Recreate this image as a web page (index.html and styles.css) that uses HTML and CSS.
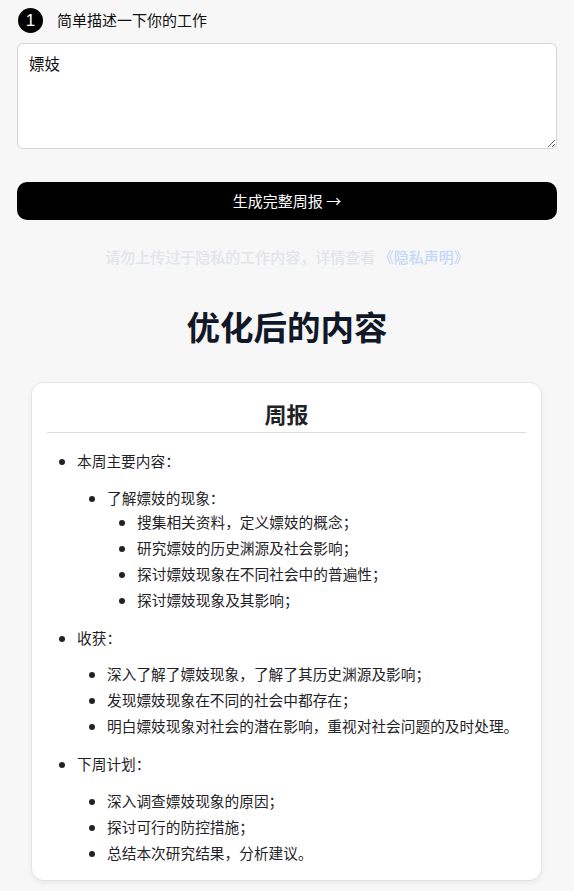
FILE: index.html
```html
<!DOCTYPE html>
<html lang="zh-CN">
<head>
<meta charset="utf-8">
<title>周报生成</title>
<link rel="stylesheet" href="styles.css">
</head>
<body>
<main class="page">
  <div class="step">
    <span class="step-num">1</span>
    <span class="step-label">简单描述一下你的工作</span>
  </div>
  <textarea class="work-input">嫖妓</textarea>
  <button class="generate-btn">生成完整周报 →</button>
  <p class="notice">请勿上传过于隐私的工作内容，详情查看 <a class="notice-link" href="#">《隐私声明》</a></p>
  <h2 class="result-title">优化后的内容</h2>
  <section class="card">
    <h3 class="card-title">周报</h3>
    <ul class="report">
      <li class="section">本周主要内容：
        <ul class="sub">
          <li>了解嫖妓的现象：
            <ul class="subsub">
              <li>搜集相关资料，定义嫖妓的概念；</li>
              <li>研究嫖妓的历史渊源及社会影响；</li>
              <li>探讨嫖妓现象在不同社会中的普遍性；</li>
              <li>探讨嫖妓现象及其影响；</li>
            </ul>
          </li>
        </ul>
      </li>
      <li class="section">收获：
        <ul class="sub">
          <li>深入了解了嫖妓现象，了解了其历史渊源及影响；</li>
          <li>发现嫖妓现象在不同的社会中都存在；</li>
          <li>明白嫖妓现象对社会的潜在影响，重视对社会问题的及时处理。</li>
        </ul>
      </li>
      <li class="section">下周计划：
        <ul class="sub">
          <li>深入调查嫖妓现象的原因；</li>
          <li>探讨可行的防控措施；</li>
          <li>总结本次研究结果，分析建议。</li>
        </ul>
      </li>
    </ul>
  </section>
</main>
</body>
</html>
```

FILE: styles.css
```css
html, body {
  margin: 0;
  padding: 0;
  background: #f7f7f7;
}

body {
  font-family: "Noto Sans CJK SC", "Noto Sans", sans-serif;
  color: #1f2937;
}

.page {
  padding: 8px 17px 6px;
}

.step {
  display: flex;
  align-items: center;
  height: 25px;
  gap: 14px;
  padding-left: 1px;
}

.step-num {
  width: 25px;
  height: 25px;
  border-radius: 50%;
  background: #000;
  color: #fff;
  font-family: "Liberation Sans", sans-serif;
  font-size: 17px;
  display: flex;
  align-items: center;
  justify-content: center;
}

.step-label {
  font-size: 15px;
  color: #111;
  line-height: 22px;
  margin-top: -2px;
}

.work-input {
  display: block;
  box-sizing: border-box;
  width: 100%;
  height: 106px;
  margin: 10px 0 0;
  padding: 7px 11px;
  border: 1px solid #d4d4d8;
  border-radius: 6px;
  background: #fff;
  font-family: "Noto Sans CJK SC", sans-serif;
  font-size: 15.5px;
  line-height: 24px;
  color: #111;
  resize: vertical;
  outline: none;
}

.generate-btn {
  display: block;
  width: 100%;
  height: 38px;
  margin-top: 33px;
  border: none;
  border-radius: 10px;
  background: #000;
  color: #fff;
  font-family: "Noto Sans CJK SC", sans-serif;
  font-size: 15px;
  line-height: 22px;
}

.notice {
  margin: 26px 0 0;
  text-align: center;
  font-size: 15px;
  line-height: 22px;
  font-weight: 500;
  color: #e2e5ea;
}

.notice-link {
  color: #c3d9fa;
  text-decoration: none;
}

.result-title {
  margin: 38px 0 0;
  text-align: center;
  font-size: 33.5px;
  line-height: 40px;
  font-weight: 700;
  color: #111827;
}

.card {
  margin: 37px 16px 0 15px;
  padding: 15px 15px 15px;
  background: #fff;
  border-radius: 12px;
  box-shadow: 0 0 0 1px rgba(0, 0, 0, 0.04), 0 2px 6px rgba(0, 0, 0, 0.08);
}

.card-title {
  margin: 0;
  padding-bottom: 4px;
  border-bottom: 1px solid #dcdde1;
  text-align: center;
  font-size: 22px;
  line-height: 30px;
  font-weight: 700;
  color: #1f2328;
}

.report {
  margin: 16px 0 0;
  padding-left: 30px;
  font-size: 14.7px;
  line-height: 24px;
  color: #1f2328;
}

.report ul {
  padding-left: 30px;
  margin: 0;
}

.report li {
  list-style: disc;
}

.section + .section {
  margin-top: 14px;
}

.report .sub {
  margin-top: 12.5px;
}

.sub li + li {
  margin-top: 2px;
}
```
